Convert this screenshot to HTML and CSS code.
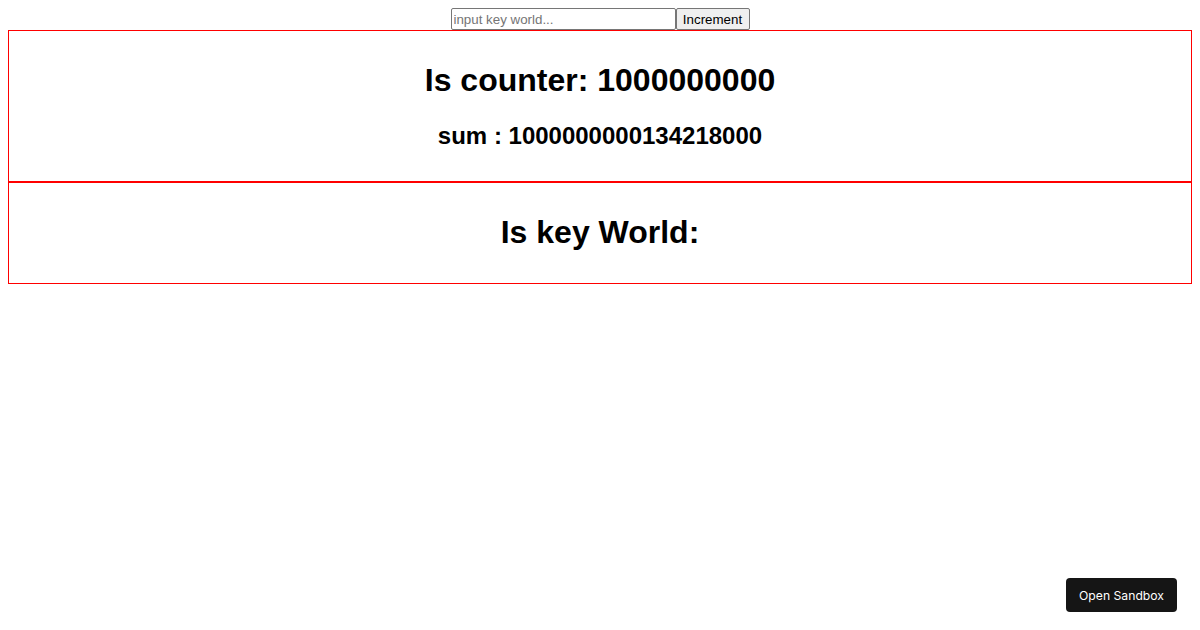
FILE: index.html
```html
<!DOCTYPE html>
<html>
<head>
<meta charset="utf-8">
<link rel="stylesheet" href="styles.css">
</head>
<body>
<div class="toolbar"><input class="key-input" type="text" placeholder="input key world..."><button class="btn">Increment</button></div>
<div class="box">
  <h1 class="title">Is counter: 1000000000</h1>
  <h2 class="sub">sum : 1000000000134218000</h2>
</div>
<div class="box">
  <h1 class="title">Is key World:</h1>
</div>
<a class="sandbox">Open Sandbox</a>
</body>
</html>
```
FILE: styles.css
```css
body {
  margin: 8px;
  font-family: "Liberation Sans", Arial, sans-serif;
  background: #fff;
  color: #000;
}
.toolbar {
  display: flex;
  justify-content: center;
  height: 22px;
}
.key-input {
  box-sizing: border-box;
  width: 225px;
  height: 22px;
  margin: 0;
  padding: 1px 2px;
  border: 1px solid #767676;
  border-radius: 2px;
  font-family: "Liberation Sans", Arial, sans-serif;
  font-size: 13.33px;
}
.key-input::placeholder { color: #757575; }
.btn {
  box-sizing: border-box;
  width: 74px;
  height: 22px;
  margin: 0;
  padding: 1px 6px;
  border: 1px solid #767676;
  border-radius: 2px;
  background: #efefef;
  font-family: "Liberation Sans", Arial, sans-serif;
  font-size: 13.33px;
  color: #000;
}
.box {
  border: 1px solid red;
  padding: 10px;
  text-align: center;
}
.title {
  font-size: 32px;
  line-height: 37px;
  font-weight: bold;
  margin: 21.44px 0;
}
.sub {
  font-size: 24px;
  line-height: 30px;
  font-weight: bold;
  margin: 19.92px 0;
}
.sandbox {
  position: fixed;
  right: 23px;
  bottom: 18px;
  width: 111px;
  height: 34px;
  box-sizing: border-box;
  display: flex;
  align-items: center;
  justify-content: center;
  background: #151515;
  color: #fff;
  border-radius: 4px;
  font-family: Inter, "Liberation Sans", sans-serif;
  font-size: 12.2px;
}
```
